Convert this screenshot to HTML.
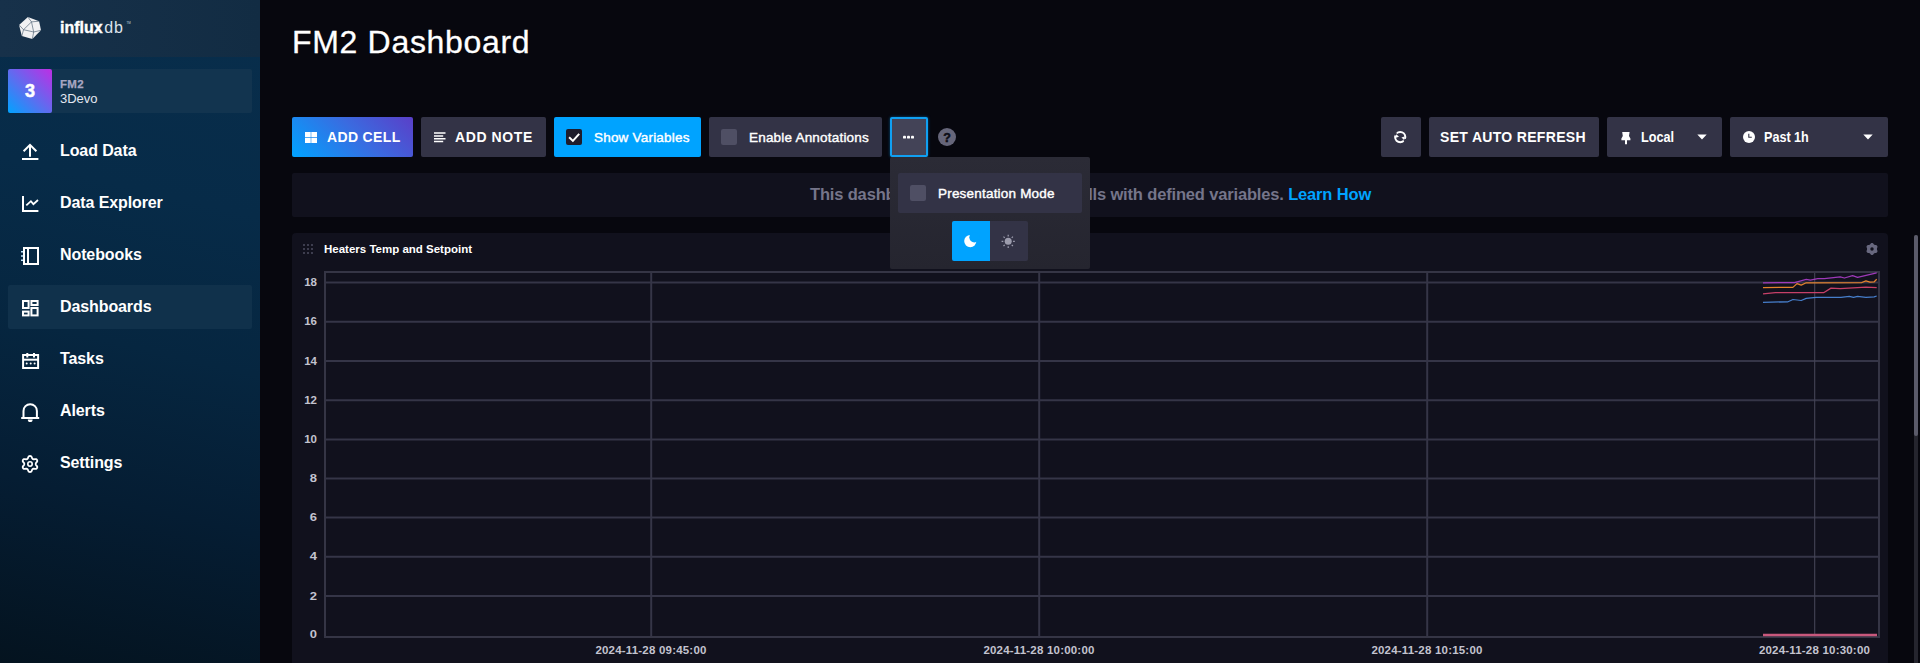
<!DOCTYPE html>
<html lang="en">
<head>
<meta charset="utf-8">
<title>FM2 Dashboard</title>
<style>
*{box-sizing:border-box;margin:0;padding:0}
html,body{width:1920px;height:663px;overflow:hidden;background:#07070e;font-family:"Liberation Sans",sans-serif;color:#fff}
#side{position:absolute;left:0;top:0;width:260px;height:663px;background:linear-gradient(193deg,#082e4c 0%,#072b48 30%,#062640 52%,#051d33 74%,#04131f 100%)}
#side .hdr{position:absolute;left:0;top:0;width:260px;height:57px;background:linear-gradient(90deg,#17314a,#122c43)}
#logo{position:absolute;left:60px;top:18px;font-size:16px;line-height:20px;font-weight:bold;white-space:nowrap;letter-spacing:0;-webkit-text-stroke:.4px #fff}
#logo i{font-style:normal;font-weight:normal;color:#dde3ec;margin-left:1.6px;letter-spacing:.9px;-webkit-text-stroke:0}
#logo sup{position:absolute;left:66.5px;top:2px;font-size:3px;-webkit-text-stroke:0;font-weight:normal;line-height:6px;color:#c9d3de}
#side .org{position:absolute;left:8px;top:69px;width:244px;height:44px;background:#12344f;border-radius:2px}
#side .ava{position:absolute;left:0;top:0;width:44px;height:44px;border-radius:2px;background:linear-gradient(45deg,#00a3ff 0%,#5a6ff0 45%,#be2ee4 100%);font-weight:bold;font-size:18px;text-align:center;line-height:44px;-webkit-text-stroke:.5px #fff}
.o1{position:absolute;left:52px;top:8px;letter-spacing:.3px;-webkit-text-stroke:.25px #a8a6c2;font-size:11.5px;line-height:14px;font-weight:bold;color:#a8a6c2;white-space:nowrap}
.o2{position:absolute;left:52px;top:22px;font-size:13px;line-height:16px;color:#e3e7f0;white-space:nowrap}
.nav{position:absolute;left:8px;width:244px;height:44px;border-radius:2px}
.nav.on{background:#10314b}
.nav span{position:absolute;left:52px;top:0;line-height:44px;font-size:16px;font-weight:bold;white-space:nowrap;letter-spacing:-.1px}
#icons{position:absolute;left:0;top:0}
#title{position:absolute;left:292px;top:20px;font-size:32px;line-height:44px;white-space:nowrap;letter-spacing:.68px;-webkit-text-stroke:.3px #fff}
.btn{position:absolute;top:117px;height:40px;border-radius:2px;background:#333346;font-weight:bold;white-space:nowrap;font-size:14px}
.btn span{position:absolute;top:0;line-height:40px}
.md{font-weight:normal;-webkit-text-stroke:.4px #fff;font-size:13.5px !important;letter-spacing:.2px;margin-top:.5px}
.bd{font-size:14px;transform:scaleX(.9);transform-origin:0 50%}
.cb{position:absolute;width:16px;height:16px;border-radius:2px;background:#4f4f64}
#varbar{position:absolute;left:292px;top:173px;width:1596px;height:44px;background:#11111d;border-radius:2px}
#varbar span{position:absolute;top:0;line-height:43px;font-size:16.5px;letter-spacing:-.16px;font-weight:bold;color:#75758a;white-space:nowrap}
#varbar b{color:#00a3ff}
#cell{position:absolute;left:292px;top:233px;width:1596px;height:440px;background:#11111d;border-radius:4px}
#ctitle{position:absolute;left:324px;top:242px;font-size:11.5px;line-height:14px;font-weight:bold;white-space:nowrap}
#chart{position:absolute;left:0;top:0}
#chart text{font-family:"Liberation Sans",sans-serif;font-weight:bold;font-size:11.5px;fill:#c3c3cf}
#pop{position:absolute;left:890px;top:157px;width:200px;height:112px;background:linear-gradient(180deg,#2b2b36,#25252f);border-radius:2px}
#pop .item{position:absolute;left:8px;top:16px;width:184px;height:40px;background:#333346;border-radius:2px}
#pop .item span{position:absolute;left:40px;top:0;line-height:40px;font-size:14px;white-space:nowrap}
#tog{position:absolute;left:62px;top:64px;width:76px;height:40px;background:#333346;border-radius:2px;overflow:hidden}
#tog div{position:absolute;left:0;top:0;width:38px;height:40px;background:#00a3ff}
#over{position:absolute;left:0;top:0}
#sbt{position:absolute;left:1914px;top:235px;width:4px;height:440px;background:#25252e;border-radius:2px}
#sbh{position:absolute;left:1914px;top:235px;width:4px;height:201px;background:#5b5b6a;border-radius:2px}
</style>
</head>
<body>
<div id="side">
<div class="hdr"></div>
<div id="logo">influx<i>db</i><sup>TM</sup></div>
<div class="org"><div class="ava">3</div><div class="o1">FM2</div><div class="o2">3Devo</div></div>
<div class="nav" style="top:129px"><span>Load Data</span></div>
<div class="nav" style="top:181px"><span>Data Explorer</span></div>
<div class="nav" style="top:233px"><span>Notebooks</span></div>
<div class="nav on" style="top:285px"><span>Dashboards</span></div>
<div class="nav" style="top:337px"><span>Tasks</span></div>
<div class="nav" style="top:389px"><span>Alerts</span></div>
<div class="nav" style="top:441px"><span>Settings</span></div>
<svg id="icons" width="260" height="663" viewBox="0 0 260 663" fill="none" stroke="#fff" stroke-width="2">
<g stroke="none"><polygon points="27.9,17.1 39.1,21.2 41,30.3 32.3,39.1 21.8,36.1 19.1,24.9" fill="#f1f1f3"/></g>
<g stroke="#3d5266" stroke-width="0.6"><path d="M27.9,17.1 L31.5,21.9 L39.1,21.2 M31.5,21.9 L33.7,32 L41,30.3 M33.7,32 L32.3,39.1 M33.7,32 L23.5,29.7 L19.1,24.9 M23.5,29.7 L21.8,36.1 M23.5,29.7 L31.5,21.9"/></g>
<path d="M22,159H38.4M30,156.7V145M23.6,151.2L30,144.8L36.4,151.2"/>
<path d="M23,196V211H38.4"/><path d="M26.3,205.3L30.9,201.2L33.4,204.2L38,200" stroke-width="1.8"/>
<rect x="24" y="248" width="14" height="16"/><path d="M28,248V264"/><path d="M21,251.8H23M21,256H23M21,260.2H23" stroke-width="1.6" stroke="#bfe6ff"/>
<rect x="23" y="301" width="5.6" height="7"/><rect x="31.4" y="301" width="6.2" height="4"/><rect x="23" y="311.6" width="5.6" height="3.8"/><rect x="31.4" y="308" width="6.2" height="7.4"/>
<rect x="23.1" y="355" width="15" height="13"/><path d="M23,359.7H38"/><path d="M27.3,353V357.6M34,353V357.6"/><g fill="#fff" stroke="none"><circle cx="26.7" cy="363.4" r="1"/><circle cx="30.7" cy="363.4" r="1"/><circle cx="34.6" cy="363.4" r="1"/></g>
<path d="M23.5,417V410.9a6.7,6.7 0 0 1 13.4,0V417"/><path d="M21.2,418H39.2"/><path d="M27.8,419.5a2.4,2.6 0 0 0 4.8,0Z" fill="#fff" stroke="none"/>
<path d="M35.70,464.00 L35.78,463.49 L36.02,462.94 L36.66,462.21 L37.23,461.37 L37.25,460.62 L37.01,459.95 L36.55,459.41 L35.89,459.06 L34.88,459.12 L33.93,459.32 L33.33,459.25 L32.85,459.06 L32.45,458.74 L32.09,458.26 L31.79,457.34 L31.34,456.43 L30.70,456.03 L30.00,455.90 L29.30,456.03 L28.66,456.43 L28.21,457.34 L27.91,458.26 L27.55,458.74 L27.15,459.06 L26.67,459.25 L26.07,459.32 L25.12,459.12 L24.11,459.06 L23.45,459.41 L22.99,459.95 L22.75,460.62 L22.77,461.37 L23.34,462.21 L23.98,462.94 L24.22,463.49 L24.30,464.00 L24.22,464.51 L23.98,465.06 L23.34,465.79 L22.77,466.63 L22.75,467.38 L22.99,468.05 L23.45,468.59 L24.11,468.94 L25.12,468.88 L26.07,468.68 L26.67,468.75 L27.15,468.94 L27.55,469.26 L27.91,469.74 L28.21,470.66 L28.66,471.57 L29.30,471.97 L30.00,472.10 L30.70,471.97 L31.34,471.57 L31.79,470.66 L32.09,469.74 L32.45,469.26 L32.85,468.94 L33.33,468.75 L33.93,468.68 L34.88,468.88 L35.89,468.94 L36.55,468.59 L37.01,468.05 L37.25,467.38 L37.23,466.63 L36.66,465.79 L36.02,465.06 L35.78,464.51Z" stroke-width="1.8" stroke-linejoin="round"/><circle cx="30" cy="464" r="2.2" stroke-width="1.6"/>
</svg>
</div>
<div id="title">FM2 Dashboard</div>
<div class="btn" style="left:292px;width:121px;background:linear-gradient(45deg,#00a3ff 0%,#3a6be0 55%,#5a3fc8 100%)"><span style="left:35px;letter-spacing:.35px">ADD CELL</span></div>
<div class="btn" style="left:421px;width:125px"><span style="left:34px;letter-spacing:.6px">ADD NOTE</span></div>
<div class="btn" style="left:554px;width:147px;background:#00a3ff"><div class="cb" style="left:12px;top:12px;background:#1e1c2c"></div><span class="md" style="left:40px">Show Variables</span></div>
<div class="btn" style="left:709px;width:173px"><div class="cb" style="left:12px;top:12px"></div><span class="md" style="left:40px">Enable Annotations</span></div>
<div class="btn" style="left:890px;width:38px;background:#434357;border:2px solid #10a0f2;box-shadow:0 0 3px rgba(0,163,255,.5)"></div>
<div class="btn" style="left:1381px;width:40px"></div>
<div class="btn" style="left:1429px;width:170px"><span style="left:11px;letter-spacing:.32px">SET AUTO REFRESH</span></div>
<div class="btn" style="left:1607px;width:115px"><span class="bd" style="left:34px">Local</span></div>
<div class="btn" style="left:1730px;width:158px"><span class="bd" style="left:34px">Past 1h</span></div>
<div id="varbar"><span style="left:518px">This dashboard doesn't have any cells with defined variables. <b>Learn How</b></span></div>
<div id="cell"></div>
<div id="ctitle">Heaters Temp and Setpoint</div>
<svg id="chart" width="1920" height="663" viewBox="0 0 1920 663">
<g stroke="#353547" stroke-width="2" fill="none">
<path d="M325,282.6 H1879"/>
<path d="M325,321.8 H1879"/>
<path d="M325,361.1 H1879"/>
<path d="M325,400.25 H1879"/>
<path d="M325,439.4 H1879"/>
<path d="M325,478.5 H1879"/>
<path d="M325,517.6 H1879"/>
<path d="M325,556.8 H1879"/>
<path d="M325,596 H1879"/>
<path d="M651.2,272 V637"/>
<path d="M1039.2,272 V637"/>
<path d="M1427.2,272 V637"/>
<path d="M1814.7,272 V637" stroke-width="1.1" stroke="#454556"/>
</g>
<rect x="325" y="272" width="1554" height="365" fill="none" stroke="#353545" stroke-width="2"/>
<text x="317" y="286.20000000000005" text-anchor="end">18</text>
<text x="317" y="325.40000000000003" text-anchor="end">16</text>
<text x="317" y="364.70000000000005" text-anchor="end">14</text>
<text x="317" y="403.85" text-anchor="end">12</text>
<text x="317" y="443.0" text-anchor="end">10</text>
<text transform="translate(317,482.1) scale(1.13,1)" text-anchor="end">8</text>
<text transform="translate(317,521.2) scale(1.13,1)" text-anchor="end">6</text>
<text transform="translate(317,560.4) scale(1.13,1)" text-anchor="end">4</text>
<text transform="translate(317,599.6) scale(1.13,1)" text-anchor="end">2</text>
<text transform="translate(317,638.1) scale(1.13,1)" text-anchor="end">0</text>
<text x="651" y="654" text-anchor="middle" letter-spacing=".2">2024-11-28 09:45:00</text>
<text x="1039" y="654" text-anchor="middle" letter-spacing=".2">2024-11-28 10:00:00</text>
<text x="1427" y="654" text-anchor="middle" letter-spacing=".2">2024-11-28 10:15:00</text>
<text x="1814.5" y="654" text-anchor="middle" letter-spacing=".2">2024-11-28 10:30:00</text>
<polyline fill="none" stroke="#a83cc4" stroke-width="1.25" stroke-opacity=".93" stroke-linejoin="round" points="1763,282.8 1794.6,282.6 1806.2,279.3 1810.3,280.1 1817.8,278.6 1824.4,278.6 1840.2,276.8 1844.4,278 1852.6,275.6 1857.6,277.3 1876.7,272.8"/>
<polyline fill="none" stroke="#f58a2c" stroke-width="1.25" stroke-opacity=".93" stroke-linejoin="round" points="1763,287.6 1792.9,287.4 1797,283.6 1801.2,285.1 1806.2,282.8 1861.8,282.5 1865.9,280.8 1870,282.1 1874.2,281.8 1876.7,279.3"/>
<polyline fill="none" stroke="#d4446e" stroke-width="1.25" stroke-opacity=".93" stroke-linejoin="round" points="1763,293.9 1775.5,292.7 1823.6,292.7 1831,288.1 1840.2,288.7 1866,287.1 1876.7,287.7"/>
<polyline fill="none" stroke="#4a86d8" stroke-width="1.25" stroke-opacity=".93" stroke-linejoin="round" points="1763,302.3 1788,301.8 1793,299.5 1801.2,300.5 1806.2,298.4 1816.1,297.4 1841,297.4 1849.3,296.4 1853.5,297.4 1857.6,296.4 1865.9,297.4 1874.2,296.9 1876.7,296"/>
<path d="M1763,635 H1877" stroke="#c8587c" stroke-width="2.4"/>
</svg>
<div id="pop"><div class="item"><div class="cb" style="left:12px;top:12px"></div><span class="md">Presentation Mode</span></div><div id="tog"><div></div></div></div>
<svg id="over" width="1920" height="663" viewBox="0 0 1920 663" fill="#fff">
<path d="M305,132h5.7v5.2h-5.7zM311.3,132h5.7v5.2h-5.7zM305,137.9h5.7v5.1h-5.7zM311.3,137.9h5.7v5.1h-5.7z"/>
<path d="M434,132.3h11.5v1.5h-11.5zM434,135.2h9.2v1.5h-9.2zM434,138h11.5v1.5h-11.5zM434,140.8h9.2v1.5h-9.2z"/>
<path d="M569.1,137.2L572.9,140.9L579.2,133.8" fill="none" stroke="#fff" stroke-width="2"/>
<rect x="903" y="135.8" width="3" height="2.8" rx=".9"/><rect x="907" y="135.8" width="3" height="2.8" rx=".9"/><rect x="911" y="135.8" width="3" height="2.8" rx=".9"/>
<circle cx="947" cy="137" r="9" fill="#66667a"/><text x="947" y="141.5" text-anchor="middle" font-family="Liberation Sans,sans-serif" font-weight="bold" font-size="12.5" fill="#0d0d17" stroke="#0d0d17" stroke-width=".5">?</text>
<circle cx="1400.2" cy="137.1" r="5.1" fill="none" stroke="#fff" stroke-width="2"/><path d="M1393.6,135.2l2.6,-3.4l1,3.6z M1406.8,139l-2.6,3.4l-1,-3.6z" fill="#333346"/><path d="M1396.2,134.2l2.8,2.6l-3.2,1z M1404.2,140l-2.8,-2.6l3.2,-1z"/>
<path d="M1622.2,132h7.4l-.6,4l1.4,2.4v1.8h-9v-1.8l1.4,-2.4z M1625,140h2v4.2h-2z"/>
<path d="M1697.3,134.5h9.4l-4.7,5z M1863.3,134.5h9.4l-4.7,5z"/>
<circle cx="1749" cy="137" r="6"/><path d="M1748.8,133.8V137.2H1751.8" fill="none" stroke="#333346" stroke-width="1.1"/>
<path d="M303,244h2v2h-2zM303,248h2v2h-2zM303,252h2v2h-2zM307,244h2v2h-2zM307,248h2v2h-2zM307,252h2v2h-2zM311,244h2v2h-2zM311,248h2v2h-2zM311,252h2v2h-2z" fill="#3d3d4e"/>
<path d="M1876.95,249.00 L1876.98,248.56 L1877.06,248.11 L1877.31,247.58 L1877.51,246.99 L1877.44,246.46 L1877.24,245.97 L1876.92,245.56 L1876.49,245.23 L1875.89,245.11 L1875.30,245.06 L1874.87,244.91 L1874.47,244.71 L1874.11,244.47 L1873.76,244.17 L1873.42,243.69 L1873.02,243.23 L1872.52,243.02 L1872.00,242.95 L1871.48,243.02 L1870.98,243.23 L1870.58,243.69 L1870.24,244.17 L1869.89,244.47 L1869.53,244.71 L1869.13,244.91 L1868.70,245.06 L1868.11,245.11 L1867.51,245.23 L1867.08,245.56 L1866.76,245.97 L1866.56,246.46 L1866.49,246.99 L1866.69,247.58 L1866.94,248.11 L1867.02,248.56 L1867.05,249.00 L1867.02,249.44 L1866.94,249.89 L1866.69,250.42 L1866.49,251.01 L1866.56,251.54 L1866.76,252.03 L1867.08,252.44 L1867.51,252.77 L1868.11,252.89 L1868.70,252.94 L1869.13,253.09 L1869.53,253.29 L1869.89,253.53 L1870.24,253.83 L1870.58,254.31 L1870.98,254.77 L1871.48,254.98 L1872.00,255.05 L1872.52,254.98 L1873.02,254.77 L1873.42,254.31 L1873.76,253.83 L1874.11,253.53 L1874.47,253.29 L1874.87,253.09 L1875.30,252.94 L1875.89,252.89 L1876.49,252.77 L1876.92,252.44 L1877.24,252.03 L1877.44,251.54 L1877.51,251.01 L1877.31,250.42 L1877.06,249.89 L1876.98,249.44Z" fill="#68687f"/><circle cx="1872" cy="249" r="1.7" fill="#11111d"/>
<circle cx="970.3" cy="241.1" r="6.1"/><circle cx="974.4" cy="237.3" r="5.1" fill="#00a3ff"/>
<circle cx="1008.2" cy="241.3" r="3.5" fill="#9c9cad"/><path d="M1013.1,241.3L1014.8,241.3M1011.7,244.8L1012.9,246.0M1008.2,246.2L1008.2,247.9M1004.7,244.8L1003.5,246.0M1003.3,241.3L1001.6,241.3M1004.7,237.8L1003.5,236.6M1008.2,236.4L1008.2,234.7M1011.7,237.8L1012.9,236.6" stroke="#9c9cad" stroke-width="1.2" fill="none"/>
</svg>
<div id="sbt"></div><div id="sbh"></div>
</body>
</html>
